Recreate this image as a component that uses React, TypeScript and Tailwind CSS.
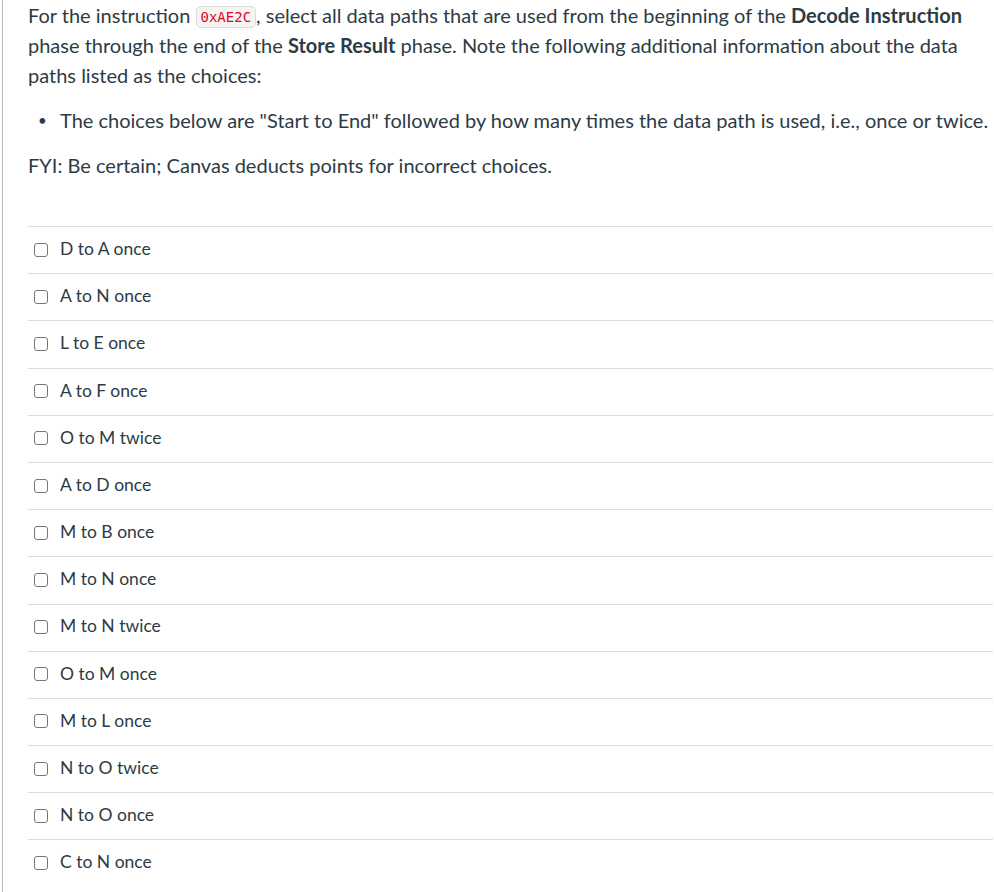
import React from "react";

const answers = [
  "D to A once",
  "A to N once",
  "L to E once",
  "A to F once",
  "O to M twice",
  "A to D once",
  "M to B once",
  "M to N once",
  "M to N twice",
  "O to M once",
  "M to L once",
  "N to O twice",
  "N to O once",
  "C to N once",
];

export default function App() {
  return (
    <div className="min-h-[892px] bg-white font-['Lato','Liberation_Sans',sans-serif] text-[#2d3b45]">
      <div className="ml-[2px] min-h-[892px] border-l border-[#b8bcbf] pl-[25px] pr-[1px]">
        {/* Question text */}
        <div className="text-[20px] leading-[30px]">
          <p>
            For the instruction{" "}
            <code className="rounded-[5px] border border-[#dcdcdc] bg-[#f5f5f5] px-[4px] py-[2px] align-[1px] font-['DejaVu_Sans_Mono',monospace] text-[14px] leading-[18px] text-[#e0061f]">
              0xAE2C
            </code>
            , select all data paths that are used from the beginning of the{" "}
            <strong className="font-bold">Decode Instruction</strong> phase through the end of the{" "}
            <strong className="font-bold">Store Result</strong> phase. Note the following additional
            information about the data paths listed as the choices:
          </p>
          <ul className="mt-[15px]">
            <li className="flex">
              <span className="w-[32px] pl-[10px] text-[15px]">•</span>
              <span>
                The choices below are "Start to End" followed by how many times the data path is
                used, i.e., once or twice.
              </span>
            </li>
          </ul>
          <p className="mt-[15px]">FYI: Be certain; Canvas deducts points for incorrect choices.</p>
        </div>

        {/* Answers */}
        <div className="mt-[46px]">
          {answers.map((a) => (
            <label
              key={a}
              className="flex h-[47.2px] items-center border-t border-[#dcdcdc] pb-[2px] text-[17.5px]"
            >
              <span className="ml-[6px] mr-[12px] mt-[1px] inline-block h-[14px] w-[14px] rounded-[3px] border border-[#767676] bg-white" />
              <span>{a}</span>
            </label>
          ))}
        </div>
      </div>
    </div>
  );
}
